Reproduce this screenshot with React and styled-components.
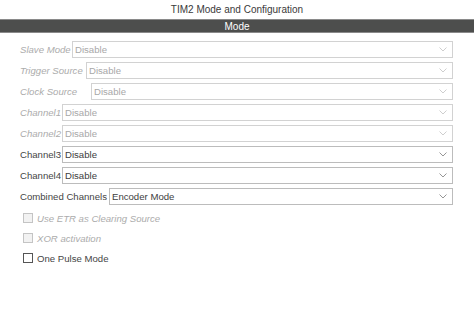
import React from "react";
import styled, { createGlobalStyle } from "styled-components";

const GlobalStyle = createGlobalStyle`
  html, body {
    margin: 0;
    padding: 0;
    background: #ffffff;
    font-family: "Liberation Sans", Arial, sans-serif;
  }
`;

const Page = styled.div`
  width: 474px;
  height: 330px;
  background: #ffffff;
  display: flex;
  flex-direction: column;
`;

const TitleBar = styled.div`
  height: 19px;
  display: flex;
  align-items: center;
  justify-content: center;
  font-size: 10px;
  color: #3a3a3a;
`;

const SectionBar = styled.div`
  height: 12px;
  background: #4d4e4d;
  border-top: 1px solid #8a8a8a;
  border-bottom: 1px solid #8a8a8a;
  display: flex;
  align-items: center;
  justify-content: center;
  font-size: 10px;
  color: #ffffff;
`;

const Form = styled.div`
  display: flex;
  flex-direction: column;
  gap: 4px;
  padding: 8px 21px 0 20px;
`;

const Row = styled.div`
  display: flex;
  align-items: center;
  height: 17px;
`;

const Label = styled.span`
  width: ${(p) => p.$width}px;
  flex-shrink: 0;
  font-size: 9.6px;
  white-space: nowrap;
  font-style: ${(p) => (p.$disabled ? "italic" : "normal")};
  color: ${(p) => (p.$disabled ? "#acacac" : "#454545")};
`;

const Select = styled.div`
  flex: 1;
  height: 15px;
  border: 1px solid ${(p) => (p.$disabled ? "#d2d2d2" : "#bcbcbc")};
  background: #ffffff;
  display: flex;
  align-items: center;
  justify-content: space-between;
  padding: 0 5px 0 2px;
  font-size: 9.6px;
  color: ${(p) => (p.$disabled ? "#a8a8a8" : "#404040")};
`;

const Checks = styled.div`
  display: flex;
  flex-direction: column;
  padding: 3px 0 0 23px;
`;

const CheckRow = styled.div`
  height: 20px;
  display: flex;
  align-items: center;
  gap: 4px;
  font-size: 9.6px;
  font-style: ${(p) => (p.$disabled ? "italic" : "normal")};
  color: ${(p) => (p.$disabled ? "#acacac" : "#454545")};
`;

const Box = styled.span`
  width: 8px;
  height: 8px;
  border: 1px solid ${(p) => (p.$disabled ? "#c4c4c4" : "#555555")};
  background: ${(p) => (p.$disabled ? "#f2f2f2" : "#ffffff")};
`;

const Chevron = ({ color }) => (
  <svg width="8" height="5" viewBox="0 0 8 5">
    <path d="M0.5 0.5 L4 4 L7.5 0.5" fill="none" stroke={color} strokeWidth="0.9" />
  </svg>
);

const rows = [
  { label: "Slave Mode", width: 52, value: "Disable", disabled: true },
  { label: "Trigger Source", width: 66, value: "Disable", disabled: true },
  { label: "Clock Source", width: 71, value: "Disable", disabled: true },
  { label: "Channel1", width: 42, value: "Disable", disabled: true },
  { label: "Channel2", width: 42, value: "Disable", disabled: true },
  { label: "Channel3", width: 42, value: "Disable", disabled: false },
  { label: "Channel4", width: 42, value: "Disable", disabled: false },
  { label: "Combined Channels", width: 89, value: "Encoder Mode", disabled: false },
];

const checks = [
  { label: "Use ETR as Clearing Source", disabled: true },
  { label: "XOR activation", disabled: true },
  { label: "One Pulse Mode", disabled: false },
];

export default function App() {
  return (
    <Page>
      <GlobalStyle />
      <TitleBar>TIM2 Mode and Configuration</TitleBar>
      <SectionBar>Mode</SectionBar>
      <Form>
        {rows.map((r) => (
          <Row key={r.label}>
            <Label $width={r.width} $disabled={r.disabled}>
              {r.label}
            </Label>
            <Select $disabled={r.disabled}>
              <span>{r.value}</span>
              <Chevron color={r.disabled ? "#c8c8c8" : "#8a8a8a"} />
            </Select>
          </Row>
        ))}
      </Form>
      <Checks>
        {checks.map((c) => (
          <CheckRow key={c.label} $disabled={c.disabled}>
            <Box $disabled={c.disabled} />
            {c.label}
          </CheckRow>
        ))}
      </Checks>
    </Page>
  );
}
